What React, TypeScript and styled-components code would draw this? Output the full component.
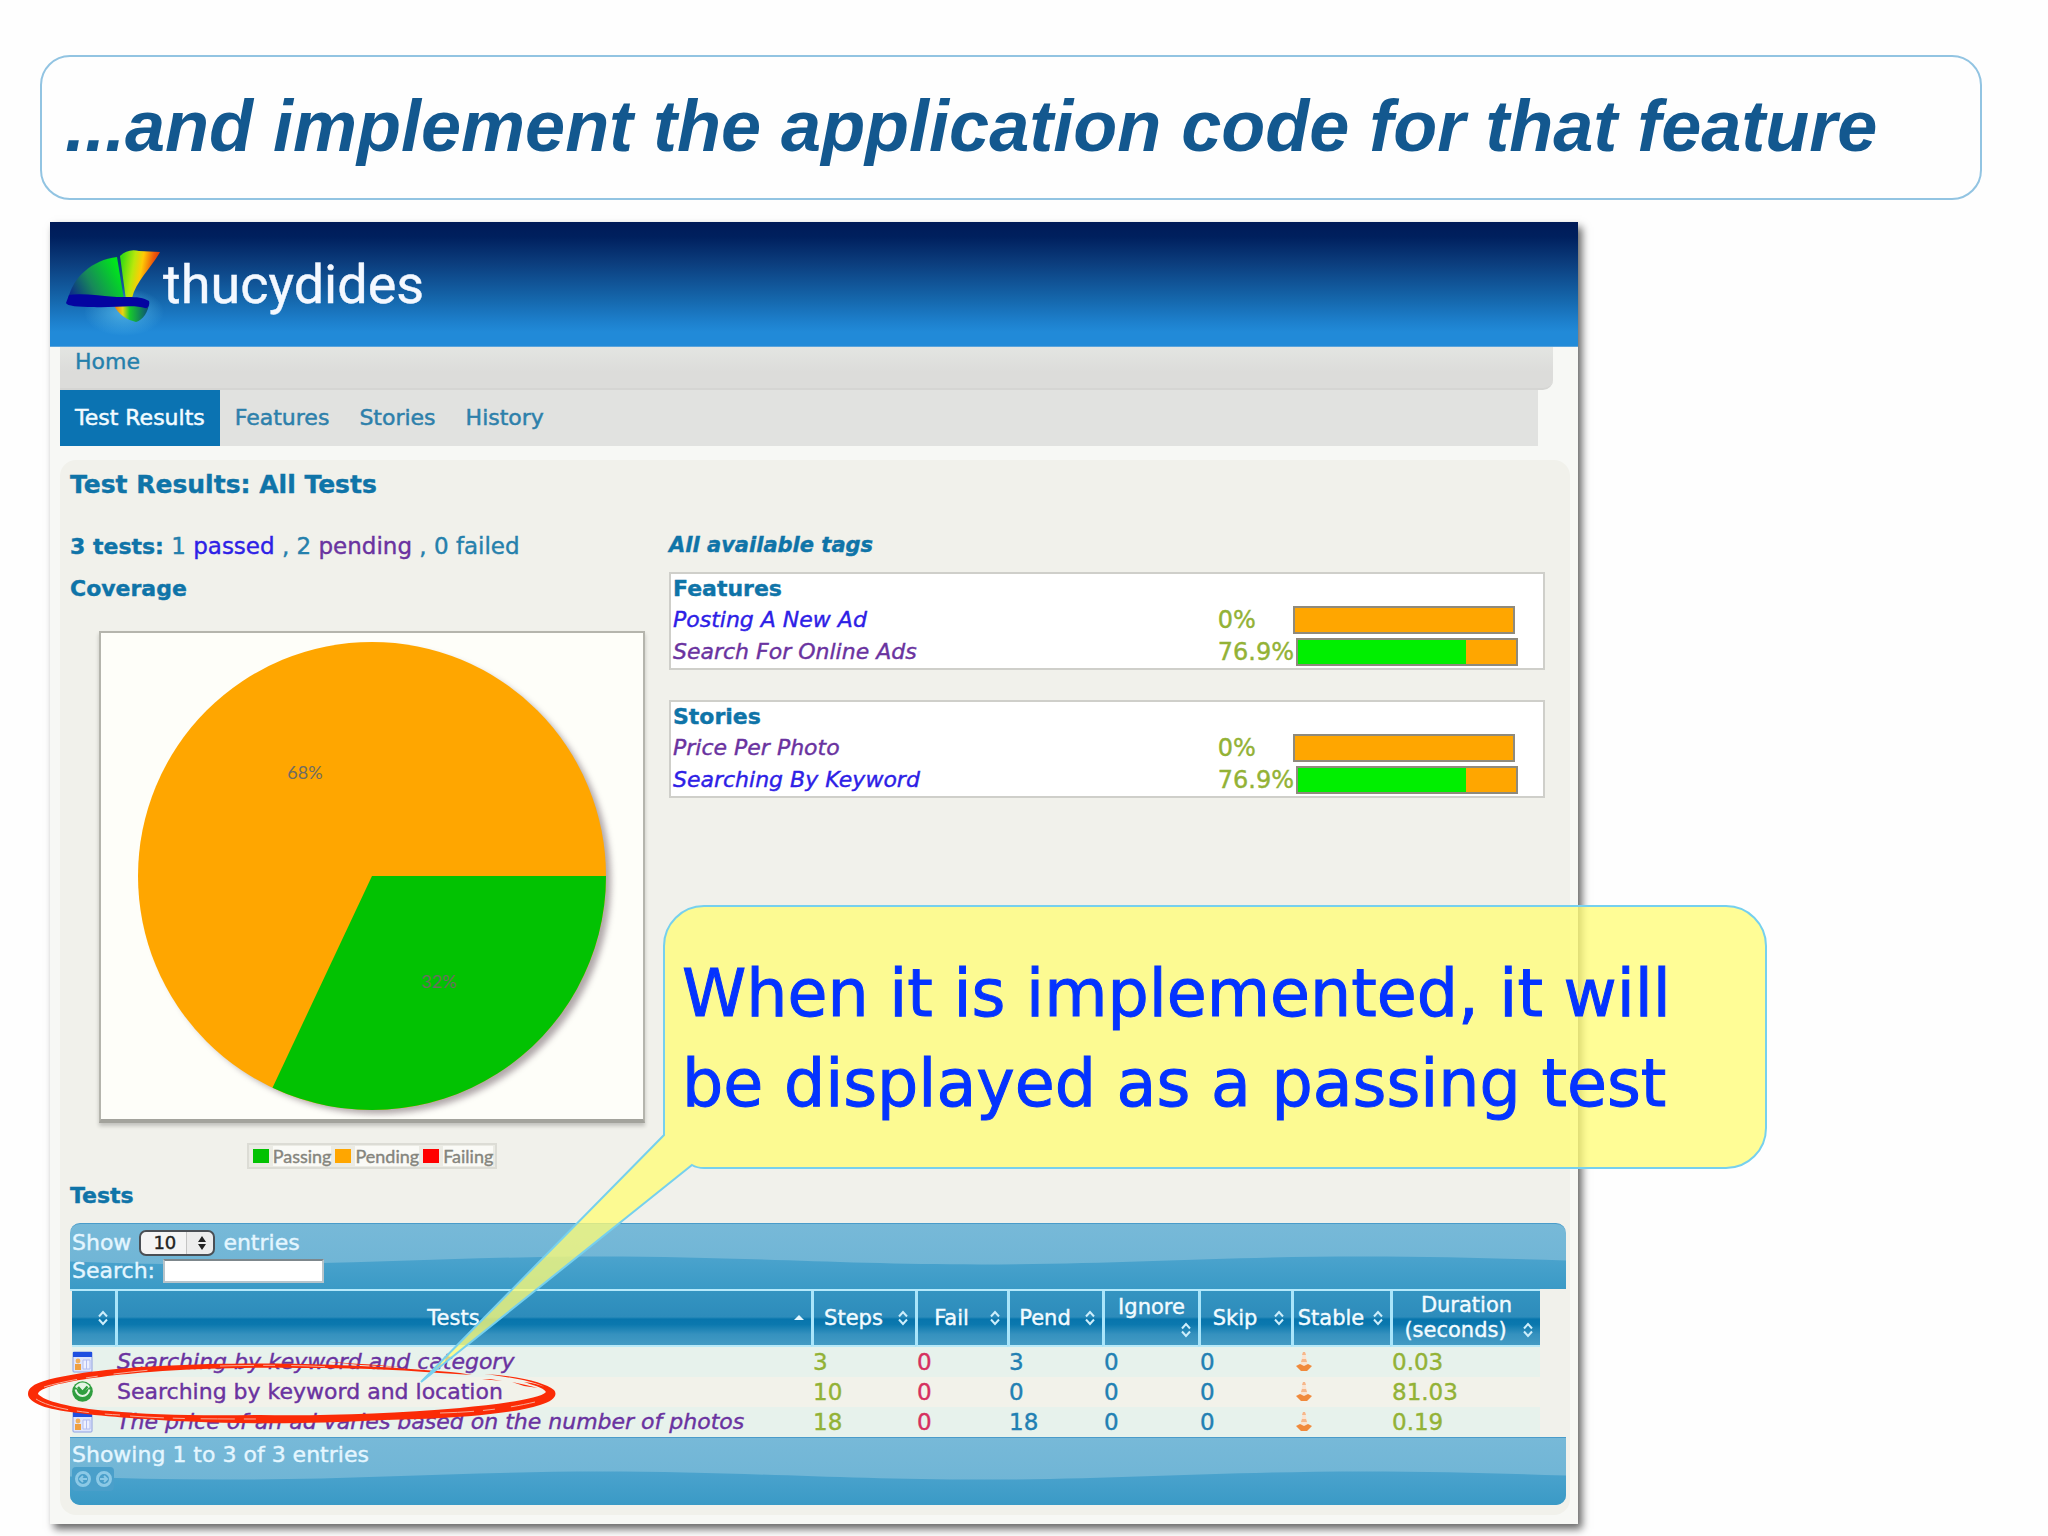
import React from 'react';
import styled, { createGlobalStyle } from 'styled-components';

const GlobalStyle = createGlobalStyle`
  *, *::before, *::after { box-sizing: border-box; }
  body { margin: 0; background: #fefefe; overflow-x: hidden; }
  h1, h2, h3, h4, p { margin: 0; }
  button, input, select { font: inherit; }
`;

const sans = `Verdana, "DejaVu Sans", sans-serif`;
const link = '#2d20e6';
const visited = '#6a33a0';
const brand = '#0f74a8';
const green = '#93b236';
const blue = '#2280b3';
const red = '#d6305f';

const Slide = styled.main`
  padding: 55px 66px 14px 40px;
  font-family: ${sans};
  font-size: 22px;
  line-height: 28px;
  color: #2580ac;
`;

const Title = styled.h1`
  padding: 28px 23px 31px;
  border: 2px solid #92c4e2;
  border-radius: 30px;
  font: italic bold 72px/82px Helvetica, "Liberation Sans", Arial, sans-serif;
  color: #13588f;
`;

const Report = styled.section`
  position: relative;
  width: 100%;
  max-width: 1528px;
  margin: 22px 0 0 10px;
  padding-bottom: 9px;
  background: #f7f8f5;
  box-shadow: 4px 5px 8px rgba(0, 0, 0, 0.6);
  -webkit-text-stroke: 0.4px currentColor;
`;

const Banner = styled.header`
  display: flex;
  align-items: flex-start;
  height: 125px;
  padding: 28px 12px 0;
  background: linear-gradient(#001a57 0%, #00205e 12%, #0b3c7c 32%, #1567ac 62%, #1d80cd 80%, #218ad8 88%, #218ad8 99%, #7fb4de 100%);
`;

const Brand = styled.span`
  margin: 3px 0 0 7px;
  font: 400 54px/64px Roboto, sans-serif;
  color: #f4f8ff;
`;

const Crumbs = styled.nav`
  height: 43px;
  margin: 0 25px 0 10px;
  padding: 1px 15px;
  border-bottom: 2px solid #d5d5d3;
  border-radius: 0 0 10px 0;
  background: linear-gradient(#e3e5e2, #dcdcda 60%);
`;

const NavLink = styled.a`
  color: inherit;
  text-decoration: none;
`;

const Tabs = styled.nav`
  display: flex;
  margin: 0 40px 14px 10px;
  background: #e1e2e0;
`;

const Tab = styled.a<{ $active?: boolean }>`
  padding: 14px 15px;
  line-height: 28px;
  text-decoration: none;
  -webkit-text-stroke: 0.5px currentColor;
  color: ${p => (p.$active ? '#f2fbff' : '#2d80ab')};
  background: ${p => (p.$active ? '#0b73b2' : 'transparent')};
`;

const Content = styled.div`
  margin: 0 8px 0 10px;
  padding: 10px 4px 10px 10px;
  border-radius: 16px;
  background: #f1f1eb;
`;

const PageTitle = styled.h2`
  font-size: 25px;
  line-height: 30px;
  color: ${brand};
`;

const Columns = styled.div`
  display: grid;
  grid-template-columns: 599fr 876fr;
  margin: 32px 21px 0 0;
`;

const Heading = styled.h3<{ $italic?: boolean }>`
  font-size: 22px;
  line-height: 28px;
  color: ${brand};
  ${p => p.$italic && 'font-style: italic; font-size: 21px; line-height: 26px; margin-bottom: 14px;'}
`;

const Summary = styled.p`
  margin-bottom: 14px;
  font-size: 23px;
  white-space: nowrap;
  strong { font-size: 22px; color: ${brand}; }
`;

const ResultLink = styled.a<{ $visited?: boolean; $plain?: boolean }>`
  color: ${p => (p.$visited ? visited : link)};
  font-style: ${p => (p.$plain ? 'normal' : 'italic')};
  text-decoration: none;
`;

const Figure = styled.figure`
  display: flex;
  flex-direction: column;
  align-items: center;
  width: 546px;
  margin: 28px 0 0 29px;
`;

const Chart = styled.div`
  width: 100%;
  height: 492px;
  border: 2px solid #b5b5ad;
  border-bottom: 4px solid #a3a39c;
  background: #fefef9;
  box-shadow: 0 3px 4px rgba(0, 0, 0, 0.2);
  svg { display: block; width: 100%; height: 100%; }
  text { font: 18px Lato, sans-serif; fill: #6f6c62; text-anchor: middle; }
`;

const Legend = styled.figcaption`
  display: flex;
  gap: 4px;
  margin-top: 20px;
  padding: 1px 2px 1px 4px;
  border: 2px solid #dcdcd5;
  background: #ebebe4;
  font: 18px/20px Lato, sans-serif;
  color: #85857d;
`;

const LegendItem = styled.span<{ $color: string }>`
  display: flex;
  align-items: center;
  gap: 4px;
  &::before { content: ''; width: 16px; height: 14px; background: ${p => p.$color}; }
  span { background: #fafaf6; }
`;

const TagBox = styled.section`
  padding: 0 2px;
  border: 2px solid #cfcfca;
  background: #fff;
  & + & { margin-top: 30px; }
`;

const TagTitle = styled.h4`
  font-size: 22px;
  line-height: 30px;
  color: ${brand};
`;

const TagRow = styled.div`
  display: grid;
  grid-template-columns: 546fr 324fr;
  align-items: center;
  height: 32px;
`;

const Progress = styled.span`
  display: flex;
  align-items: center;
`;

const Percent = styled.span`
  min-width: 75px;
  padding-right: 2px;
  font-size: 24px;
  color: ${green};
`;

const Bar = styled.span`
  width: 222px;
  height: 28px;
  border: 2px solid #8f8a7c;
  background: #ffa600;
`;

const BarFill = styled.span`
  display: block;
  height: 100%;
  background: #00ef00;
`;

const TestsHeading = styled(Heading)`
  margin: 13px 0;
`;

const WaveBar = styled.div<{ $bottom?: boolean }>`
  position: relative;
  height: ${p => (p.$bottom ? '68px' : '66px')};
  padding: 5px 2px 0;
  border-top: 1px solid #4a9cca;
  border-radius: ${p => (p.$bottom ? '0 0 10px 10px' : '10px 10px 0 0')};
  background: linear-gradient(#77b9d8, #6cb3d4);
  overflow: hidden;
  color: #e4f6ff;
`;

const WaveArt = styled.svg`
  position: absolute;
  inset: 0;
  width: 100%;
  height: 100%;
`;

const Controls = styled.div`
  position: relative;
  display: flex;
  align-items: center;
  gap: 8px;
  height: 28px;
`;

const SelectBox = styled.span`
  position: relative;
  display: flex;
  svg { position: absolute; right: 8px; top: 5px; pointer-events: none; }
`;

const Select = styled.select`
  appearance: none;
  width: 76px;
  height: 26px;
  padding: 0 0 0 12px;
  border: 2px solid #4a4f55;
  border-radius: 7px;
  background: linear-gradient(90deg, #f4f4f4 45px, #c4c4c4 45px, #c4c4c4 46px, #ececec 46px);
  font-size: 18px;
  line-height: 20px;
  color: #222;
`;

const SearchInput = styled.input`
  width: 161px;
  height: 24px;
  border: 2px solid #b8c4ca;
  border-top-color: #7d878c;
  background: #fff;
`;

const TableWrap = styled.div`
  margin-right: 26px;
  padding-left: 2px;
  border-top: 2px solid #b5e9fb;
`;

const Table = styled.table`
  width: 100%;
  table-layout: fixed;
  border-spacing: 0;
`;

const Th = styled.th`
  height: 56px;
  padding: 0;
  border-left: 3px solid #a9e5fa;
  border-bottom: 2px solid #b9eaf8;
  background: linear-gradient(#3494c1 0%, #2d8cbb 48%, #0775ac 52%, #0b78ae 62%, #3591be 80%, #439bc4 100%);
  font-size: 21px;
  font-weight: 400;
  line-height: 26px;
  color: #f2fbff;
  &:first-child { border-left: 0; }
`;

const ThLine = styled.span`
  display: flex;
  align-items: center;
  min-height: 22px;
  padding-right: 6px;
  > span { flex: 1; }
  > svg { margin-left: 4px; }
`;

const ThTop = styled.span`
  display: block;
  line-height: 24px;
`;

const Tr = styled.tr`
  background: #f2f2ea;
  &:nth-child(odd) { background: #e7f2ec; }
`;

const Td = styled.td<{ $color?: string }>`
  height: 30px;
  padding: 0 0 0 2px;
  line-height: 28px;
  white-space: nowrap;
  color: ${p => p.$color || 'inherit'};
  &:first-child { padding: 0; }
  svg { display: block; }
`;

const Num = styled(Td)`
  font-size: 23px;
`;

const StableCell = styled(Td)`
  padding-left: 4px;
`;

const Info = styled.p`
  position: relative;
  line-height: 24px;
`;

const Pager = styled.div`
  position: relative;
  display: flex;
  width: 42px;
  background: #4a9fca;
  border-radius: 4px;
`;

const PageButton = styled.button`
  flex: 1;
  height: 24px;
  padding: 0;
  border: 0;
  background: none;
  svg { display: block; margin: 0 auto; }
`;

const Callout = styled.aside`
  position: absolute;
  left: 369px;
  top: 682px;
  width: 1350px;
  height: 482px;
  padding: 45px 0 0 263px;
  > svg { position: absolute; left: 0; top: 0; }
`;

const CalloutText = styled.p`
  position: relative;
  font: 65px/90px Chalkboard, "Comic Sans MS", "DejaVu Sans", sans-serif;
  color: #0433ff;
  white-space: nowrap;
  -webkit-text-stroke: 1px currentColor;
`;

const Ring = styled.svg`
  position: absolute;
  left: -30px;
  top: 1128px;
  pointer-events: none;
`;

const Logo = () => (
  <svg width="94" height="78" viewBox="0 0 94 78" overflow="visible" aria-hidden="true">
    <defs>
      <linearGradient id="fanL" x1="0" y1="0.9" x2="1" y2="0.5">
        <stop offset="0" stopColor="#0a1f90" />
        <stop offset="0.45" stopColor="#17885a" />
        <stop offset="1" stopColor="#00e61c" />
      </linearGradient>
      <linearGradient id="fanR" x1="0" y1="0.4" x2="1" y2="0.62">
        <stop offset="0" stopColor="#3bdc12" />
        <stop offset="0.3" stopColor="#b9e80c" />
        <stop offset="0.5" stopColor="#ffcb05" />
        <stop offset="0.75" stopColor="#ee5a0a" />
        <stop offset="1" stopColor="#c41c0c" />
      </linearGradient>
      <linearGradient id="fanB" x1="0" y1="0" x2="1" y2="0">
        <stop offset="0" stopColor="#f06a12" />
        <stop offset="0.25" stopColor="#e8d614" />
        <stop offset="0.45" stopColor="#17c92c" />
        <stop offset="1" stopColor="#0c4a7a" />
      </linearGradient>
      <radialGradient id="glow">
        <stop offset="0" stopColor="#5fc4ee" stopOpacity="0.7" />
        <stop offset="1" stopColor="#5fc4ee" stopOpacity="0" />
      </radialGradient>
    </defs>
    <ellipse cx="62" cy="62" rx="40" ry="24" fill="url(#glow)" />
    <path d="M6 49C11 27 30 10 55 7L62 50Z" fill="url(#fanL)" />
    <path d="M58 6C63 1 70-1 77 1L98 2C90 17 74 31 70 48L64 50Z" fill="url(#fanR)" />
    <path d="M52 55L87 52C87 61 81 70 74 72C66 70 56 65 52 55Z" fill="url(#fanB)" />
    <path d="M7 45C20 43 38 46 55 47C68 47 80 46 87 51C88 55 86 59 83 58C72 54 50 58 32 57C16 57 5 56 4 53Z" fill="#0404a0" />
  </svg>
);

const SortBoth = () => (
  <svg width="12" height="16" viewBox="0 0 12 16" fill="none" stroke="#cdeefb" strokeWidth="2" aria-hidden="true">
    <path d="M2 6.5L6 2L10 6.5M2 9.5L6 14L10 9.5" />
  </svg>
);

const SortAsc = () => (
  <svg width="12" height="16" viewBox="0 0 12 16" aria-hidden="true">
    <path d="M1 10L6 5L11 10Z" fill="#e8f8ff" />
  </svg>
);

const PendingIcon = () => (
  <svg width="21" height="22" viewBox="0 0 21 22" role="img" aria-label="Pending">
    <rect x="1" y="1" width="19" height="20" rx="1" fill="#dfe6fb" stroke="#8fa0e0" />
    <rect x="1" y="1" width="19" height="5" fill="#1f4fe0" />
    <circle cx="6" cy="10" r="2.4" fill="#f2b05a" />
    <rect x="3" y="13" width="6" height="6" fill="#efa040" />
    <path d="M11 9h7v9h-7z" fill="#eef1fe" stroke="#b3bdf0" />
    <path d="M14.5 9v9" stroke="#b3bdf0" />
  </svg>
);

const PassIcon = () => (
  <svg width="21" height="22" viewBox="0 0 21 22" role="img" aria-label="Passed">
    <circle cx="10.5" cy="10.5" r="10.300" fill="#2f9e3f" />
    <path d="M3 6C6 0 15 0 18 6L11 11Z" fill="#e4f5e4" />
    <path d="M3.500 8.500C6 17 15 17 17.500 8.500" fill="none" stroke="#e4f5e4" strokeWidth="2" />
    <path d="M6 6L10.500 11L15.500 5.500" fill="none" stroke="#2f9e3f" strokeWidth="2.500" />
  </svg>
);

const ConeIcon = () => (
  <svg width="18" height="22" viewBox="0 0 18 22" role="img" aria-label="Stable">
    <path d="M8 1h2l3 15H5Z" fill="#fbe3d0" />
    <path d="M8 1h2l1 3H7ZM7 8h4l1 3H6Z" fill="#f6b78a" />
    <path d="M1 15L5 13L9 15L13 13L17 15L12 20H6Z" fill="#f08a3c" />
  </svg>
);

const Arrow = ({ flip }: { flip?: boolean }) => (
  <svg width="18" height="18" viewBox="0 0 18 18" aria-hidden="true">
    <circle cx="9" cy="9" r="6.500" fill="none" stroke="#8cc9e6" strokeWidth="3" />
    <path d={flip ? 'M5 9H11M9 6L12 9L9 12' : 'M13 9H7M9 6L6 9L9 12'} fill="none" stroke="#8cc9e6" strokeWidth="2" />
  </svg>
);

const Wave = () => (
  <WaveArt viewBox="0 0 1496 66" preserveAspectRatio="none" aria-hidden="true">
    <defs>
      <linearGradient id="wave" x1="0" y1="0" x2="0" y2="1">
        <stop offset="0" stopColor="#4ba3cd" />
        <stop offset="1" stopColor="#3a9ac6" />
      </linearGradient>
    </defs>
    <path d="M0 38C50 40 100 41 150 41C290 41 400 33 530 33C670 33 770 41 910 41C1050 41 1150 33 1293 33C1370 33 1430 35 1496 37V66H0Z" fill="url(#wave)" />
  </WaveArt>
);

const Pie = () => (
  <svg viewBox="0 0 542 486" role="img" aria-label="68% pending, 32% passing">
    <defs>
      <filter id="soft" x="-10%" y="-10%" width="120%" height="120%">
        <feGaussianBlur stdDeviation="3" />
      </filter>
    </defs>
    <circle cx="277" cy="248" r="233" fill="#8f8388" opacity="0.7" filter="url(#soft)" />
    <circle cx="271" cy="243" r="234" fill="#ffa600" />
    <path d="M271 243H505A234 234 0 0 1 171.500 454.800Z" fill="#02c202" />
    <text x="204" y="146">68%</text>
    <text x="338" y="355">32%</text>
  </svg>
);

const BrushRing = () => (
  <Ring width="560" height="90" viewBox="0 0 560 90" fill="#fb2b06" aria-hidden="true">
    <path d="M8 44C8 38 14 34 24 31C55 22 100 18 140 16C190 13 250 13 285 14C330 15 390 18 440 23L452 25L420 23C370 19 330 18 285 18C240 17 180 18 130 22C90 25 55 30 35 35C24 38 18 41 18 44C24 51 50 58 90 61C130 65 180 66 240 65C300 66 370 64 440 58C480 54 520 49 526 42C523 37 512 35 504 32C515 33 522 36 525 37C512 31 490 27 464 24C500 26 526 33 534 40C538 45 534 51 520 55C495 63 450 67 400 69C350 70 310 73 280 73C220 74 160 72 110 68C70 65 35 61 22 56C12 52 8 48 8 44Z" />
    <path d="M462 29L470 29L482 31ZM492 32L506 35L518 38L504 36ZM300 11C320 13 350 14 380 17L340 15Z" />
    <path
      d="M24 37C50 29 90 24 130 20M16 49C30 58 60 63 100 65M200 16C240 15 280 15 310 17M110 66C150 69 190 69 240 69M420 63C460 62 490 58 515 52"
      fill="none"
      stroke="#f8ab98"
      strokeWidth="1"
      strokeDasharray="34 9 12 16"
    />
  </Ring>
);

type TagEntry = { name: string; pct: number; seen?: boolean };
const tagGroups: { title: string; rows: TagEntry[] }[] = [
  { title: 'Features', rows: [{ name: 'Posting A New Ad', pct: 0 }, { name: 'Search For Online Ads', pct: 76.9, seen: true }] },
  { title: 'Stories', rows: [{ name: 'Price Per Photo', pct: 0, seen: true }, { name: 'Searching By Keyword', pct: 76.9 }] },
];

const tests = [
  { name: 'Searching by keyword and category', passed: false, n: [3, 0, 3, 0, 0], time: '0.03' },
  { name: 'Searching by keyword and location', passed: true, n: [10, 0, 0, 0, 0], time: '81.03' },
  { name: 'The price of an ad varies based on the number of photos', passed: false, n: [18, 0, 18, 0, 0], time: '0.19' },
];

const colors = [green, red, blue, blue, blue];
const colWidths = [43, 696, 104, 92, 95, 96, 93, 99, 150];

export default function App() {
  const total = colWidths.reduce((a, b) => a + b, 0);
  return (
    <>
      <GlobalStyle />
      <Slide>
        <Title>...and implement the application code for that feature</Title>
        <Report>
          <Banner>
            <Logo />
            <Brand>thucydides</Brand>
          </Banner>
          <Crumbs aria-label="Breadcrumb">
            <NavLink href="#home">Home</NavLink>
          </Crumbs>
          <Tabs aria-label="Sections">
            <Tab href="#results" $active>Test Results</Tab>
            <Tab href="#features">Features</Tab>
            <Tab href="#stories">Stories</Tab>
            <Tab href="#history">History</Tab>
          </Tabs>
          <Content>
            <PageTitle>Test Results: All Tests</PageTitle>
            <Columns>
              <div>
                <Summary>
                  <strong>3 tests:</strong> 1 <ResultLink href="#passed" $plain>passed</ResultLink> , 2{' '}
                  <ResultLink href="#pending" $plain $visited>pending</ResultLink> , 0 failed
                </Summary>
                <Heading>Coverage</Heading>
                <Figure>
                  <Chart><Pie /></Chart>
                  <Legend>
                    <LegendItem $color="#02c202"><span>Passing</span></LegendItem>
                    <LegendItem $color="#ffa600"><span>Pending</span></LegendItem>
                    <LegendItem $color="#ff0000"><span>Failing</span></LegendItem>
                  </Legend>
                </Figure>
              </div>
              <div>
                <Heading $italic>All available tags</Heading>
                {tagGroups.map(g => (
                  <TagBox key={g.title}>
                    <TagTitle>{g.title}</TagTitle>
                    {g.rows.map(r => (
                      <TagRow key={r.name}>
                        <ResultLink href="#tag" $visited={r.seen}>{r.name}</ResultLink>
                        <Progress>
                          <Percent>{r.pct}%</Percent>
                          <Bar><BarFill style={{ width: `${r.pct}%` }} /></Bar>
                        </Progress>
                      </TagRow>
                    ))}
                  </TagBox>
                ))}
              </div>
            </Columns>
            <TestsHeading>Tests</TestsHeading>
            <WaveBar>
              <Wave />
              <Controls>
                <label htmlFor="length">Show</label>
                <SelectBox>
                  <Select id="length" defaultValue="10">
                    <option>10</option>
                    <option>25</option>
                  </Select>
                  <svg width="10" height="16" viewBox="0 0 10 16" aria-hidden="true">
                    <path d="M1 7L5 1L9 7ZM1 9L5 15L9 9Z" fill="#222" />
                  </svg>
                </SelectBox>
                <span>entries</span>
              </Controls>
              <Controls>
                <label htmlFor="search">Search:</label>
                <SearchInput id="search" type="text" />
              </Controls>
            </WaveBar>
            <TableWrap>
              <Table>
                <colgroup>
                  {colWidths.map((w, i) => <col key={i} style={{ width: `${(w / total) * 100}%` }} />)}
                </colgroup>
                <thead>
                  <tr>
                    <Th aria-label="Result"><ThLine><span /><SortBoth /></ThLine></Th>
                    <Th><ThLine><span>Tests</span><SortAsc /></ThLine></Th>
                    <Th><ThLine><span>Steps</span><SortBoth /></ThLine></Th>
                    <Th><ThLine><span>Fail</span><SortBoth /></ThLine></Th>
                    <Th><ThLine><span>Pend</span><SortBoth /></ThLine></Th>
                    <Th><ThTop>Ignore</ThTop><ThLine><span /><SortBoth /></ThLine></Th>
                    <Th><ThLine><span>Skip</span><SortBoth /></ThLine></Th>
                    <Th><ThLine><span>Stable</span><SortBoth /></ThLine></Th>
                    <Th><ThTop>Duration</ThTop><ThLine><span>(seconds)</span><SortBoth /></ThLine></Th>
                  </tr>
                </thead>
                <tbody>
                  {tests.map(t => (
                    <Tr key={t.name}>
                      <Td>{t.passed ? <PassIcon /> : <PendingIcon />}</Td>
                      <Td><ResultLink href="#test" $visited $plain={t.passed}>{t.name}</ResultLink></Td>
                      {t.n.map((v, i) => <Num key={i} $color={colors[i]}>{v}</Num>)}
                      <StableCell><ConeIcon /></StableCell>
                      <Num $color={green}>{t.time}</Num>
                    </Tr>
                  ))}
                </tbody>
              </Table>
            </TableWrap>
            <WaveBar $bottom>
              <Wave />
              <Info>Showing 1 to 3 of 3 entries</Info>
              <Pager>
                <PageButton aria-label="Previous page"><Arrow /></PageButton>
                <PageButton aria-label="Next page"><Arrow flip /></PageButton>
              </Pager>
            </WaveBar>
          </Content>
          <BrushRing />
          <Callout>
            <svg width="1350" height="482" viewBox="0 0 1350 482" aria-hidden="true">
              <path
                d="M285 2H1307A40 40 0 0 1 1347 42V224A40 40 0 0 1 1307 264H285Q278 264 273 261L2 478L245 231V42A40 40 0 0 1 285 2Z"
                fill="#fffd76" fillOpacity="0.77" stroke="#76d0ee" strokeWidth="2"
              />
            </svg>
            <CalloutText>
              When it is implemented, it will<br />be displayed as a passing test
            </CalloutText>
          </Callout>
        </Report>
      </Slide>
    </>
  );
}
